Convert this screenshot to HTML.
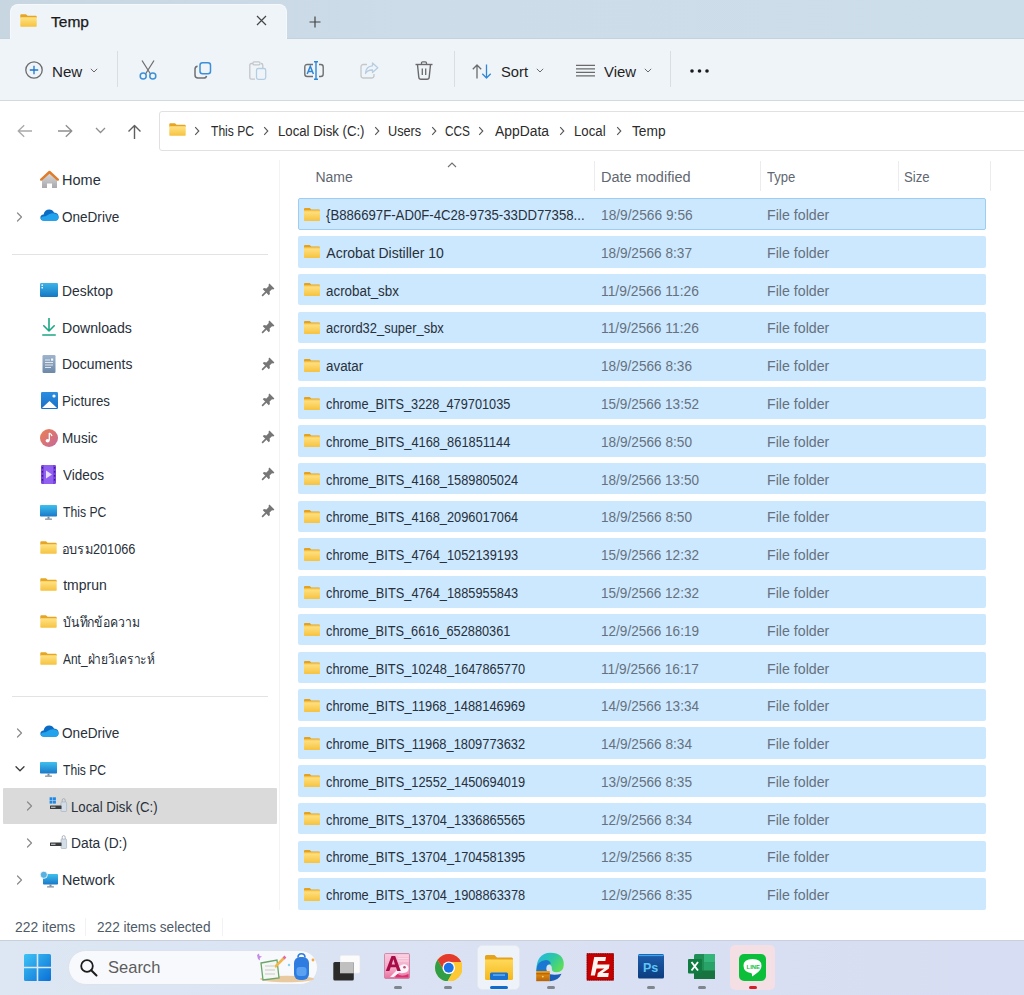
<!DOCTYPE html>
<html><head><meta charset="utf-8">
<style>
*{box-sizing:border-box;margin:0;padding:0}
html,body{width:1024px;height:995px;overflow:hidden;background:#fff;font-family:"Liberation Sans",sans-serif;font-size:14px;color:#1b1b1b}
.abs,.t,.ic,.fold,.row,.sep,.navsel{position:absolute}
.t{line-height:20px;white-space:nowrap;font-size:14px;transform-origin:0 0}
.tb{color:#1f1f1f}
.addrt{color:#2b2b2b}
.status{color:#4e5a66}
.search{color:#5d5d5d}
.name{color:#28303a}
.gray{color:#66717d}
.hdr{color:#5f6770}
svg{display:block}
#titlebar{position:absolute;left:0;top:0;width:1024px;height:39px;border-bottom:1px solid #c4d2dd;background:linear-gradient(90deg,#c8d6e1 0%,#ccdce8 40%,#cddeeb 100%)}
#tab{position:absolute;left:9.5px;top:3.5px;width:277px;height:36px;background:#eff4f9;border-radius:8px 8px 0 0;border:1px solid #f6f9fc;border-bottom:none}
#toolbar{position:absolute;left:0;top:38.5px;width:1024px;height:62px;background:#eff4f9;border-bottom:1px solid #d3d9df}
.tsep{position:absolute;width:1px;background:#d9dee3;top:51px;height:36px}
#addr{position:absolute;left:158.5px;top:110.5px;width:900px;height:40.5px;border:1px solid #e2e1df;border-radius:3px;background:#fff}
.row{left:298px;width:688px;height:31.6px;background:#cce8ff;border-radius:2px}
.row.focus{border:1px solid #9ccdf2}
.sep{left:12px;width:256px;height:1px;background:#e3e3e3}
.navsel{left:3px;width:274px;height:36px;background:#dadada;border-radius:1px}
.hsep{position:absolute;top:160.5px;width:1px;height:30px;background:#ececec}
#navline{position:absolute;left:279px;top:160px;width:1px;height:750px;background:#f3f3f3}
#taskbar{position:absolute;left:0;top:940px;width:1024px;height:55px;background:linear-gradient(90deg,#dde7f3 0%,#d9e1f3 50%,#d7ddf2 100%);border-top:1px solid #c9d0da}
#search{position:absolute;left:67.5px;top:949.8px;width:250.5px;height:35px;border-radius:18px;background:#f7f9fc;border:1px solid #dde3ea}
.ind{position:absolute;top:986px;width:8px;height:3px;border-radius:2px;background:#7f868e}
</style></head><body>
<svg width="0" height="0" style="position:absolute"><defs>
<linearGradient id="fgrad" x1="0" y1="0" x2="0" y2="1"><stop offset="0" stop-color="#ffe386"/><stop offset="1" stop-color="#f6c23f"/></linearGradient>
</defs></svg>

<!-- title bar -->
<div id="titlebar"></div>
<div id="tab"></div>
<div class="ic" style="left:20px;top:14px"><svg width="17" height="13" viewBox="0 0 17 13"><path d="M0.3 1.2Q0.3 0.2 1.3 0.2H6L7.6 1.8H15.8Q16.7 1.8 16.7 2.7V4H0.3Z" fill="#e6a623"/><path d="M0.3 3.2H16.7V12.1Q16.7 12.8 16 12.8H1Q0.3 12.8 0.3 12.1Z" fill="url(#fgrad)"/></svg></div>
<div class="ic" style="left:256px;top:15px"><svg width="11" height="11" viewBox="0 0 11 11"><path d="M1 1L10 10M10 1L1 10" stroke="#454545" stroke-width="1.2"/></svg></div>
<div class="ic" style="left:309px;top:15.5px"><svg width="12" height="12" viewBox="0 0 12 12"><path d="M6 0.5V11.5M0.5 6H11.5" stroke="#454545" stroke-width="1.2"/></svg></div>

<!-- toolbar -->
<div id="toolbar"></div>
<div class="ic" style="left:24.5px;top:61px"><svg width="18" height="18" viewBox="0 0 18 18"><circle cx="9" cy="9" r="8.2" fill="none" stroke="#6b6b6b" stroke-width="1.3"/><path d="M9 4.8V13.2M4.8 9H13.2" stroke="#1f74c9" stroke-width="1.3"/></svg></div>
<div class="ic" style="left:89.5px;top:67.5px"><svg width="8" height="5" viewBox="0 0 8 5"><path d="M0.8 0.8L4 4L7.2 0.8" fill="none" stroke="#6a6a6a" stroke-width="1"/></svg></div>
<div class="tsep" style="left:117px"></div>
<!-- cut -->
<div class="ic" style="left:138.5px;top:60px"><svg width="18" height="20" viewBox="0 0 18 20"><path d="M3 0.5L11.5 14M15 0.5L6.5 14" stroke="#707070" stroke-width="1.3"/><circle cx="4.2" cy="16" r="3" fill="none" stroke="#3d8fd8" stroke-width="1.5"/><circle cx="13.8" cy="16" r="3" fill="none" stroke="#3d8fd8" stroke-width="1.5"/></svg></div>
<!-- copy -->
<div class="ic" style="left:193.5px;top:61.5px"><svg width="18" height="17" viewBox="0 0 18 17"><rect x="6" y="0.8" width="10.5" height="11" rx="2.5" fill="none" stroke="#3d8fd8" stroke-width="1.5"/><path d="M3.6 4.2Q1 4.5 1 7.2V13Q1 16 4 16H9.5Q12.2 16 12.5 13.8" fill="none" stroke="#707070" stroke-width="1.5"/></svg></div>
<!-- paste disabled -->
<div class="ic" style="left:248.5px;top:60.5px"><svg width="18" height="19" viewBox="0 0 18 19"><path d="M4 2.5H2.5Q0.8 2.5 0.8 4.2V16.5Q0.8 18.2 2.5 18.2H6" fill="none" stroke="#c3c6c9" stroke-width="1.3"/><rect x="4" y="0.8" width="7" height="3" rx="1" fill="none" stroke="#c3c6c9" stroke-width="1.2"/><path d="M12 2.5Q13.8 2.5 13.8 4.2V7" fill="none" stroke="#c3c6c9" stroke-width="1.3"/><rect x="7.5" y="7.5" width="9.2" height="10.8" rx="1.8" fill="none" stroke="#b5cde3" stroke-width="1.3"/></svg></div>
<!-- rename -->
<div class="ic" style="left:303.5px;top:60.5px"><svg width="20" height="19" viewBox="0 0 20 19"><path d="M9 3.5H3.2Q0.8 3.5 0.8 6V13Q0.8 15.5 3.2 15.5H9M15 3.5H16.8Q19.2 3.5 19.2 6V13Q19.2 15.5 16.8 15.5H15" fill="none" stroke="#6f6f6f" stroke-width="1.4"/><path d="M3.2 13L6.3 5.2L9.4 13M4.3 10.5H8.3" fill="none" stroke="#2f86d6" stroke-width="1.5"/><path d="M12 0.8V18.2M10 0.8H14M10 18.2H14" stroke="#2f86d6" stroke-width="1.4"/></svg></div>
<!-- share disabled -->
<div class="ic" style="left:359.5px;top:62px"><svg width="19" height="17" viewBox="0 0 19 17"><path d="M7 2.5H3.5Q1 2.5 1 5V13.5Q1 16 3.5 16H11.5Q14 16 14 13.5V12" fill="none" stroke="#c4c7ca" stroke-width="1.3"/><path d="M12.5 1L17.8 5.8L12.5 10.5V8Q7.5 7.8 5.5 11.5Q5.8 4.2 12.5 3.8Z" fill="none" stroke="#b6cde2" stroke-width="1.3" stroke-linejoin="round"/></svg></div>
<!-- delete -->
<div class="ic" style="left:414.5px;top:60.5px"><svg width="18" height="19" viewBox="0 0 18 19"><path d="M6.5 3V2Q6.5 0.8 7.7 0.8H10.3Q11.5 0.8 11.5 2V3" fill="none" stroke="#6a6a6a" stroke-width="1.3"/><path d="M0.5 3.5H17.5" stroke="#6a6a6a" stroke-width="1.4"/><path d="M2.5 3.8L3.8 16.2Q4 18.2 6 18.2H12Q14 18.2 14.2 16.2L15.5 3.8" fill="none" stroke="#6a6a6a" stroke-width="1.4"/><path d="M7.3 7.5V14M10.7 7.5V14" stroke="#6a6a6a" stroke-width="1.3"/></svg></div>
<div class="tsep" style="left:454px"></div>
<!-- sort -->
<div class="ic" style="left:472px;top:63.5px"><svg width="21" height="15" viewBox="0 0 21 15"><path d="M5 14.5V1M0.8 5.2L5 1L9.2 5.2" fill="none" stroke="#6a6a6a" stroke-width="1.3" stroke-linejoin="round"/><path d="M14.5 0.5V14M10.3 9.8L14.5 14L18.7 9.8" fill="none" stroke="#2f86d6" stroke-width="1.3" stroke-linejoin="round"/></svg></div>
<div class="ic" style="left:536px;top:67.5px"><svg width="8" height="5" viewBox="0 0 8 5"><path d="M0.8 0.8L4 4L7.2 0.8" fill="none" stroke="#6a6a6a" stroke-width="1"/></svg></div>
<!-- view -->
<div class="ic" style="left:576px;top:64px"><svg width="19" height="13" viewBox="0 0 19 13"><path d="M0 1.3H19M0 4.8H19M0 8.3H19M0 11.8H19" stroke="#6a6a6a" stroke-width="1.2"/></svg></div>
<div class="ic" style="left:643.5px;top:67.5px"><svg width="8" height="5" viewBox="0 0 8 5"><path d="M0.8 0.8L4 4L7.2 0.8" fill="none" stroke="#6a6a6a" stroke-width="1"/></svg></div>
<div class="tsep" style="left:670px"></div>
<div class="ic" style="left:689.5px;top:68.5px"><svg width="19" height="4" viewBox="0 0 19 4"><circle cx="2" cy="2" r="1.8" fill="#1a1a1a"/><circle cx="9.5" cy="2" r="1.8" fill="#1a1a1a"/><circle cx="17" cy="2" r="1.8" fill="#1a1a1a"/></svg></div>

<!-- nav row -->
<div class="ic" style="left:17px;top:123.5px"><svg width="16" height="14" viewBox="0 0 16 14"><path d="M15 7H1.5M7.2 1.2L1.2 7L7.2 12.8" fill="none" stroke="#a9a9a9" stroke-width="1.3" stroke-linejoin="round"/></svg></div>
<div class="ic" style="left:57px;top:123.5px"><svg width="16" height="14" viewBox="0 0 16 14"><path d="M1 7H14.5M8.8 1.2L14.8 7L8.8 12.8" fill="none" stroke="#8e8e8e" stroke-width="1.3" stroke-linejoin="round"/></svg></div>
<div class="ic" style="left:95px;top:127px"><svg width="11" height="7" viewBox="0 0 11 7"><path d="M1 1L5.5 5.5L10 1" fill="none" stroke="#8e8e8e" stroke-width="1.3"/></svg></div>
<div class="ic" style="left:126.5px;top:123.5px"><svg width="15" height="15" viewBox="0 0 15 15"><path d="M7.5 15V1.5M1.5 7.5L7.5 1.5L13.5 7.5" fill="none" stroke="#5f5f5f" stroke-width="1.4" stroke-linejoin="round"/></svg></div>
<div id="addr"></div>
<div class="ic" style="left:169px;top:123px"><svg width="17" height="13" viewBox="0 0 17 13"><path d="M0.3 1.2Q0.3 0.2 1.3 0.2H6L7.6 1.8H15.8Q16.7 1.8 16.7 2.7V4H0.3Z" fill="#e6a623"/><path d="M0.3 3.2H16.7V12.1Q16.7 12.8 16 12.8H1Q0.3 12.8 0.3 12.1Z" fill="url(#fgrad)"/></svg></div>
<div class="ic" style="left:194px;top:125.5px"><svg width="6" height="10" viewBox="0 0 6 10"><path d="M1.2 1.2L4.8 5L1.2 8.8" fill="none" stroke="#555" stroke-width="1.1"/></svg></div>
<div class="ic" style="left:263px;top:125.5px"><svg width="6" height="10" viewBox="0 0 6 10"><path d="M1.2 1.2L4.8 5L1.2 8.8" fill="none" stroke="#555" stroke-width="1.1"/></svg></div>
<div class="ic" style="left:373.5px;top:125.5px"><svg width="6" height="10" viewBox="0 0 6 10"><path d="M1.2 1.2L4.8 5L1.2 8.8" fill="none" stroke="#555" stroke-width="1.1"/></svg></div>
<div class="ic" style="left:431px;top:125.5px"><svg width="6" height="10" viewBox="0 0 6 10"><path d="M1.2 1.2L4.8 5L1.2 8.8" fill="none" stroke="#555" stroke-width="1.1"/></svg></div>
<div class="ic" style="left:478px;top:125.5px"><svg width="6" height="10" viewBox="0 0 6 10"><path d="M1.2 1.2L4.8 5L1.2 8.8" fill="none" stroke="#555" stroke-width="1.1"/></svg></div>
<div class="ic" style="left:559px;top:125.5px"><svg width="6" height="10" viewBox="0 0 6 10"><path d="M1.2 1.2L4.8 5L1.2 8.8" fill="none" stroke="#555" stroke-width="1.1"/></svg></div>
<div class="ic" style="left:616px;top:125.5px"><svg width="6" height="10" viewBox="0 0 6 10"><path d="M1.2 1.2L4.8 5L1.2 8.8" fill="none" stroke="#555" stroke-width="1.1"/></svg></div>

<!-- nav pane -->
<div id="navline"></div>
<div class="ic" style="left:39.5px;top:170.00px"><svg width="19" height="19" viewBox="0 0 19 19"><defs><linearGradient id="hg" x1="0" y1="0" x2="0" y2="1"><stop offset="0" stop-color="#dcdcdc"/><stop offset="1" stop-color="#a8a8ad"/></linearGradient></defs><path d="M2 9L9.5 2.5L17 9V18H12V13.5H7V18H2Z" fill="url(#hg)"/><path d="M1.2 9.6L9.5 2L17.8 9.6" fill="none" stroke="#e07d2a" stroke-width="2.4" stroke-linejoin="round" stroke-linecap="round"/></svg></div>
<div class="ic" style="left:39.5px;top:209.34px"><svg width="19" height="12" viewBox="0 0 19 12"><path d="M4.2 11.8Q0.4 11.8 0.4 8.5Q0.4 5.7 3.6 5.4Q4.6 0.6 9.3 0.6Q12.6 0.6 14 3.6Q18.6 3.9 18.6 8.1Q18.6 11.8 14.8 11.8Z" fill="#0c6cc4"/><path d="M0.6 9.6Q1.5 6.8 5.5 7.2L9.5 5Q13 3.3 16.8 5.2Q18.6 6.5 18.6 8.3Q18.6 11.8 14.8 11.8H4.2Q1.4 11.8 0.6 9.6Z" fill="#22a3ec"/></svg></div>
<div class="ic" style="left:16px;top:211.84px"><svg width="8" height="10" viewBox="0 0 8 10"><path d="M1.5 1L5.5 5L1.5 9" fill="none" stroke="#8a8a8a" stroke-width="1.2" stroke-linecap="round" stroke-linejoin="round"/></svg></div>
<div class="ic" style="left:40px;top:283.02px"><svg width="18" height="14" viewBox="0 0 18 14"><defs><linearGradient id="dg" x1="0" y1="0" x2="0" y2="1"><stop offset="0" stop-color="#3bb4e8"/><stop offset="1" stop-color="#1677c2"/></linearGradient></defs><rect x="0" y="0" width="18" height="14" rx="1.2" fill="url(#dg)"/><rect x="1.5" y="1.5" width="1.5" height="1.4" fill="#fff"/><rect x="1.5" y="4" width="1.5" height="1.4" fill="#fff"/></svg></div>
<div class="ic" style="left:260.5px;top:282.92px"><svg width="14" height="14" viewBox="0 0 14 14"><path d="M8.4 0.6L13.4 5.6L12.3 6.5L11 6.2L8.6 8.6L8.9 11.1L7.8 12.2L1.8 6.2L2.9 5.1L5.4 5.4L7.8 3L7.5 1.7Z" fill="#767676"/><path d="M4.6 9.4L1.6 12.4" stroke="#767676" stroke-width="1.7" stroke-linecap="round"/></svg></div>
<div class="ic" style="left:42px;top:317.86px"><svg width="14" height="18" viewBox="0 0 14 18"><path d="M7 0.5V13M1.8 7.8L7 13L12.2 7.8" fill="none" stroke="#1ba783" stroke-width="1.6" stroke-linecap="round" stroke-linejoin="round"/><path d="M0.8 17H13.2" stroke="#1ba783" stroke-width="1.6" stroke-linecap="round"/></svg></div>
<div class="ic" style="left:260.5px;top:319.76px"><svg width="14" height="14" viewBox="0 0 14 14"><path d="M8.4 0.6L13.4 5.6L12.3 6.5L11 6.2L8.6 8.6L8.9 11.1L7.8 12.2L1.8 6.2L2.9 5.1L5.4 5.4L7.8 3L7.5 1.7Z" fill="#767676"/><path d="M4.6 9.4L1.6 12.4" stroke="#767676" stroke-width="1.7" stroke-linecap="round"/></svg></div>
<div class="ic" style="left:42px;top:355.40px"><svg width="14" height="18" viewBox="0 0 14 18"><defs><linearGradient id="docg" x1="0" y1="0" x2="0" y2="1"><stop offset="0" stop-color="#9fb4cc"/><stop offset="1" stop-color="#6c88a8"/></linearGradient></defs><rect x="0.5" y="0" width="13" height="18" rx="1.2" fill="url(#docg)"/><path d="M3 5H8M3 7.5H11M3 10H11M3 12.5H9" stroke="#fff" stroke-width="0.9" opacity="0.85"/><rect x="9" y="3.5" width="2.2" height="2.2" fill="#fff" opacity="0.9"/></svg></div>
<div class="ic" style="left:260.5px;top:356.60px"><svg width="14" height="14" viewBox="0 0 14 14"><path d="M8.4 0.6L13.4 5.6L12.3 6.5L11 6.2L8.6 8.6L8.9 11.1L7.8 12.2L1.8 6.2L2.9 5.1L5.4 5.4L7.8 3L7.5 1.7Z" fill="#767676"/><path d="M4.6 9.4L1.6 12.4" stroke="#767676" stroke-width="1.7" stroke-linecap="round"/></svg></div>
<div class="ic" style="left:40.5px;top:392.04px"><svg width="17" height="17" viewBox="0 0 17 17"><defs><linearGradient id="pg" x1="0" y1="0" x2="0" y2="1"><stop offset="0" stop-color="#2a8ee0"/><stop offset="1" stop-color="#1a6fc4"/></linearGradient></defs><rect x="0" y="0" width="17" height="17" rx="1.3" fill="url(#pg)"/><path d="M1 16L8.5 9L16 16Z" fill="#fff"/><circle cx="13" cy="4" r="1.6" fill="#fff"/></svg></div>
<div class="ic" style="left:260.5px;top:393.44px"><svg width="14" height="14" viewBox="0 0 14 14"><path d="M8.4 0.6L13.4 5.6L12.3 6.5L11 6.2L8.6 8.6L8.9 11.1L7.8 12.2L1.8 6.2L2.9 5.1L5.4 5.4L7.8 3L7.5 1.7Z" fill="#767676"/><path d="M4.6 9.4L1.6 12.4" stroke="#767676" stroke-width="1.7" stroke-linecap="round"/></svg></div>
<div class="ic" style="left:40px;top:428.58px"><svg width="18" height="18" viewBox="0 0 18 18"><defs><linearGradient id="mg" x1="0" y1="0" x2="1" y2="1"><stop offset="0" stop-color="#ef7f4f"/><stop offset="1" stop-color="#c3689e"/></linearGradient></defs><circle cx="9" cy="9" r="9" fill="url(#mg)"/><path d="M9.3 4V11.5" stroke="#fff" stroke-width="1.3"/><path d="M9.3 4Q11.5 5 12 7" stroke="#fff" stroke-width="1.3" fill="none"/><ellipse cx="7.6" cy="11.8" rx="2" ry="1.7" fill="#fff"/></svg></div>
<div class="ic" style="left:260.5px;top:430.28px"><svg width="14" height="14" viewBox="0 0 14 14"><path d="M8.4 0.6L13.4 5.6L12.3 6.5L11 6.2L8.6 8.6L8.9 11.1L7.8 12.2L1.8 6.2L2.9 5.1L5.4 5.4L7.8 3L7.5 1.7Z" fill="#767676"/><path d="M4.6 9.4L1.6 12.4" stroke="#767676" stroke-width="1.7" stroke-linecap="round"/></svg></div>
<div class="ic" style="left:41px;top:464.72px"><svg width="15" height="19" viewBox="0 0 15 19"><rect x="0" y="0" width="15" height="19" rx="1.2" fill="#7b45e0"/><rect x="3" y="0" width="9" height="19" fill="#9060f0"/><path d="M5 5.5L11 9.5L5 13.5Z" fill="#e9ddff"/><g fill="#3d1a8a"><rect x="0.8" y="2" width="1.3" height="1.6"/><rect x="0.8" y="6" width="1.3" height="1.6"/><rect x="0.8" y="10" width="1.3" height="1.6"/><rect x="0.8" y="14" width="1.3" height="1.6"/><rect x="12.9" y="2" width="1.3" height="1.6"/><rect x="12.9" y="6" width="1.3" height="1.6"/><rect x="12.9" y="10" width="1.3" height="1.6"/><rect x="12.9" y="14" width="1.3" height="1.6"/></g></svg></div>
<div class="ic" style="left:260.5px;top:467.12px"><svg width="14" height="14" viewBox="0 0 14 14"><path d="M8.4 0.6L13.4 5.6L12.3 6.5L11 6.2L8.6 8.6L8.9 11.1L7.8 12.2L1.8 6.2L2.9 5.1L5.4 5.4L7.8 3L7.5 1.7Z" fill="#767676"/><path d="M4.6 9.4L1.6 12.4" stroke="#767676" stroke-width="1.7" stroke-linecap="round"/></svg></div>
<div class="ic" style="left:40px;top:504.56px"><svg width="17" height="15" viewBox="0 0 17 15"><defs><linearGradient id="tg" x1="0" y1="0" x2="0" y2="1"><stop offset="0" stop-color="#3ec0ee"/><stop offset="1" stop-color="#1a78c8"/></linearGradient></defs><rect x="0" y="0" width="17" height="11.5" rx="0.8" fill="url(#tg)"/><rect x="7.5" y="11.5" width="2" height="2.2" fill="#7d8a96"/><rect x="5" y="13.4" width="7" height="1.3" rx="0.5" fill="#7d8a96"/></svg></div>
<div class="ic" style="left:260.5px;top:503.96px"><svg width="14" height="14" viewBox="0 0 14 14"><path d="M8.4 0.6L13.4 5.6L12.3 6.5L11 6.2L8.6 8.6L8.9 11.1L7.8 12.2L1.8 6.2L2.9 5.1L5.4 5.4L7.8 3L7.5 1.7Z" fill="#767676"/><path d="M4.6 9.4L1.6 12.4" stroke="#767676" stroke-width="1.7" stroke-linecap="round"/></svg></div>
<div class="ic" style="left:40px;top:541.20px"><svg width="17" height="13" viewBox="0 0 17 13"><path d="M0.3 1.2Q0.3 0.2 1.3 0.2H6L7.6 1.8H15.8Q16.7 1.8 16.7 2.7V4H0.3Z" fill="#e6a623"/><path d="M0.3 3.2H16.7V12.1Q16.7 12.8 16 12.8H1Q0.3 12.8 0.3 12.1Z" fill="url(#fgrad)"/></svg></div>
<div class="ic" style="left:40px;top:578.04px"><svg width="17" height="13" viewBox="0 0 17 13"><path d="M0.3 1.2Q0.3 0.2 1.3 0.2H6L7.6 1.8H15.8Q16.7 1.8 16.7 2.7V4H0.3Z" fill="#e6a623"/><path d="M0.3 3.2H16.7V12.1Q16.7 12.8 16 12.8H1Q0.3 12.8 0.3 12.1Z" fill="url(#fgrad)"/></svg></div>
<div class="ic" style="left:40px;top:614.88px"><svg width="17" height="13" viewBox="0 0 17 13"><path d="M0.3 1.2Q0.3 0.2 1.3 0.2H6L7.6 1.8H15.8Q16.7 1.8 16.7 2.7V4H0.3Z" fill="#e6a623"/><path d="M0.3 3.2H16.7V12.1Q16.7 12.8 16 12.8H1Q0.3 12.8 0.3 12.1Z" fill="url(#fgrad)"/></svg></div>
<div class="ic" style="left:40px;top:651.72px"><svg width="17" height="13" viewBox="0 0 17 13"><path d="M0.3 1.2Q0.3 0.2 1.3 0.2H6L7.6 1.8H15.8Q16.7 1.8 16.7 2.7V4H0.3Z" fill="#e6a623"/><path d="M0.3 3.2H16.7V12.1Q16.7 12.8 16 12.8H1Q0.3 12.8 0.3 12.1Z" fill="url(#fgrad)"/></svg></div>
<div class="ic" style="left:39.5px;top:725.10px"><svg width="19" height="12" viewBox="0 0 19 12"><path d="M4.2 11.8Q0.4 11.8 0.4 8.5Q0.4 5.7 3.6 5.4Q4.6 0.6 9.3 0.6Q12.6 0.6 14 3.6Q18.6 3.9 18.6 8.1Q18.6 11.8 14.8 11.8Z" fill="#0c6cc4"/><path d="M0.6 9.6Q1.5 6.8 5.5 7.2L9.5 5Q13 3.3 16.8 5.2Q18.6 6.5 18.6 8.3Q18.6 11.8 14.8 11.8H4.2Q1.4 11.8 0.6 9.6Z" fill="#22a3ec"/></svg></div>
<div class="ic" style="left:16px;top:727.60px"><svg width="8" height="10" viewBox="0 0 8 10"><path d="M1.5 1L5.5 5L1.5 9" fill="none" stroke="#8a8a8a" stroke-width="1.2" stroke-linecap="round" stroke-linejoin="round"/></svg></div>
<div class="ic" style="left:40px;top:762.44px"><svg width="17" height="15" viewBox="0 0 17 15"><defs><linearGradient id="tg" x1="0" y1="0" x2="0" y2="1"><stop offset="0" stop-color="#3ec0ee"/><stop offset="1" stop-color="#1a78c8"/></linearGradient></defs><rect x="0" y="0" width="17" height="11.5" rx="0.8" fill="url(#tg)"/><rect x="7.5" y="11.5" width="2" height="2.2" fill="#7d8a96"/><rect x="5" y="13.4" width="7" height="1.3" rx="0.5" fill="#7d8a96"/></svg></div>
<div class="ic" style="left:15px;top:765.44px"><svg width="10" height="8" viewBox="0 0 10 8"><path d="M1 1.8L5 5.8L9 1.8" fill="none" stroke="#3a3a3a" stroke-width="1.3" stroke-linecap="round" stroke-linejoin="round"/></svg></div>
<div class="navsel" style="top:788.28px"></div>
<div class="ic" style="left:48.5px;top:797.08px"><svg width="19" height="16" viewBox="0 0 19 16"><rect x="0.6" y="0.3" width="2.9" height="2.9" fill="#1e88e5"/><rect x="4" y="0.3" width="2.9" height="2.9" fill="#1e88e5"/><rect x="0.6" y="3.7" width="2.9" height="2.9" fill="#1e88e5"/><rect x="4" y="3.7" width="2.9" height="2.9" fill="#1e88e5"/><path d="M13.2 5V3.2Q13.2 1.6 14.7 1.6Q16.2 1.6 16.2 3.2V5" fill="none" stroke="#a3adb6" stroke-width="0.9"/><rect x="12" y="5" width="5.6" height="9.5" rx="0.8" fill="#d3dde7" stroke="#a3adb6" stroke-width="0.6"/><rect x="1" y="8.5" width="11.5" height="3.6" rx="0.6" fill="#3a3d3f"/><rect x="2" y="9.7" width="4.5" height="1.1" fill="#c9cdd0"/></svg></div>
<div class="ic" style="left:25.5px;top:801.28px"><svg width="8" height="10" viewBox="0 0 8 10"><path d="M1.5 1L5.5 5L1.5 9" fill="none" stroke="#8a8a8a" stroke-width="1.2" stroke-linecap="round" stroke-linejoin="round"/></svg></div>
<div class="ic" style="left:48.5px;top:833.92px"><svg width="19" height="16" viewBox="0 0 19 16"><path d="M13.2 5V3.2Q13.2 1.6 14.7 1.6Q16.2 1.6 16.2 3.2V5" fill="none" stroke="#a3adb6" stroke-width="0.9"/><rect x="12" y="5" width="5.6" height="9.5" rx="0.8" fill="#d3dde7" stroke="#a3adb6" stroke-width="0.6"/><rect x="1" y="8.5" width="11.5" height="3.6" rx="0.6" fill="#3a3d3f"/><rect x="2" y="9.7" width="4.5" height="1.1" fill="#c9cdd0"/></svg></div>
<div class="ic" style="left:25.5px;top:838.12px"><svg width="8" height="10" viewBox="0 0 8 10"><path d="M1.5 1L5.5 5L1.5 9" fill="none" stroke="#8a8a8a" stroke-width="1.2" stroke-linecap="round" stroke-linejoin="round"/></svg></div>
<div class="ic" style="left:40px;top:870.96px"><svg width="18" height="17" viewBox="0 0 18 17"><defs><linearGradient id="ng" x1="0" y1="0" x2="0" y2="1"><stop offset="0" stop-color="#3ec0ee"/><stop offset="1" stop-color="#1a78c8"/></linearGradient></defs><rect x="3" y="3" width="15" height="10.5" rx="0.8" fill="url(#ng)"/><rect x="9.5" y="13.5" width="2" height="2" fill="#7d8a96"/><rect x="7" y="15.2" width="7" height="1.3" rx="0.5" fill="#7d8a96"/><circle cx="3.8" cy="3.8" r="3.6" fill="#5ab0e0" stroke="#fff" stroke-width="0.8"/></svg></div>
<div class="ic" style="left:16px;top:874.96px"><svg width="8" height="10" viewBox="0 0 8 10"><path d="M1.5 1L5.5 5L1.5 9" fill="none" stroke="#8a8a8a" stroke-width="1.2" stroke-linecap="round" stroke-linejoin="round"/></svg></div>
<div class="sep" style="top:253.7px"></div>
<div class="sep" style="top:695.8px"></div>

<!-- header -->
<div class="ic" style="left:446.5px;top:161.8px"><svg width="10" height="6" viewBox="0 0 10 6"><path d="M1 5L5 1L9 5" fill="none" stroke="#707070" stroke-width="1.1"/></svg></div>
<div class="hsep" style="left:594.3px"></div>
<div class="hsep" style="left:760px"></div>
<div class="hsep" style="left:898px"></div>
<div class="hsep" style="left:990px"></div>

<!-- rows -->
<div class="row focus" style="top:198.20px"></div>
<div class="fold" style="left:304px;top:207.60px"><svg class="fi" width="16" height="13" viewBox="0 0 16 13"><path d="M0 1Q0 0 1 0H5.8L7.3 1.5H15Q16 1.5 16 2.5V4H0Z" fill="#e4a21f"/><path d="M0 2.6H16V12.2Q16 13 15.2 13H0.8Q0 13 0 12.2Z" fill="url(#fgrad)"/><path d="M0 2.9H16" stroke="#f0b73a" stroke-width="0.7"/></svg></div>
<div class="row" style="top:235.99px"></div>
<div class="fold" style="left:304px;top:245.39px"><svg class="fi" width="16" height="13" viewBox="0 0 16 13"><path d="M0 1Q0 0 1 0H5.8L7.3 1.5H15Q16 1.5 16 2.5V4H0Z" fill="#e4a21f"/><path d="M0 2.6H16V12.2Q16 13 15.2 13H0.8Q0 13 0 12.2Z" fill="url(#fgrad)"/><path d="M0 2.9H16" stroke="#f0b73a" stroke-width="0.7"/></svg></div>
<div class="row" style="top:273.78px"></div>
<div class="fold" style="left:304px;top:283.18px"><svg class="fi" width="16" height="13" viewBox="0 0 16 13"><path d="M0 1Q0 0 1 0H5.8L7.3 1.5H15Q16 1.5 16 2.5V4H0Z" fill="#e4a21f"/><path d="M0 2.6H16V12.2Q16 13 15.2 13H0.8Q0 13 0 12.2Z" fill="url(#fgrad)"/><path d="M0 2.9H16" stroke="#f0b73a" stroke-width="0.7"/></svg></div>
<div class="row" style="top:311.57px"></div>
<div class="fold" style="left:304px;top:320.97px"><svg class="fi" width="16" height="13" viewBox="0 0 16 13"><path d="M0 1Q0 0 1 0H5.8L7.3 1.5H15Q16 1.5 16 2.5V4H0Z" fill="#e4a21f"/><path d="M0 2.6H16V12.2Q16 13 15.2 13H0.8Q0 13 0 12.2Z" fill="url(#fgrad)"/><path d="M0 2.9H16" stroke="#f0b73a" stroke-width="0.7"/></svg></div>
<div class="row" style="top:349.36px"></div>
<div class="fold" style="left:304px;top:358.76px"><svg class="fi" width="16" height="13" viewBox="0 0 16 13"><path d="M0 1Q0 0 1 0H5.8L7.3 1.5H15Q16 1.5 16 2.5V4H0Z" fill="#e4a21f"/><path d="M0 2.6H16V12.2Q16 13 15.2 13H0.8Q0 13 0 12.2Z" fill="url(#fgrad)"/><path d="M0 2.9H16" stroke="#f0b73a" stroke-width="0.7"/></svg></div>
<div class="row" style="top:387.15px"></div>
<div class="fold" style="left:304px;top:396.55px"><svg class="fi" width="16" height="13" viewBox="0 0 16 13"><path d="M0 1Q0 0 1 0H5.8L7.3 1.5H15Q16 1.5 16 2.5V4H0Z" fill="#e4a21f"/><path d="M0 2.6H16V12.2Q16 13 15.2 13H0.8Q0 13 0 12.2Z" fill="url(#fgrad)"/><path d="M0 2.9H16" stroke="#f0b73a" stroke-width="0.7"/></svg></div>
<div class="row" style="top:424.94px"></div>
<div class="fold" style="left:304px;top:434.34px"><svg class="fi" width="16" height="13" viewBox="0 0 16 13"><path d="M0 1Q0 0 1 0H5.8L7.3 1.5H15Q16 1.5 16 2.5V4H0Z" fill="#e4a21f"/><path d="M0 2.6H16V12.2Q16 13 15.2 13H0.8Q0 13 0 12.2Z" fill="url(#fgrad)"/><path d="M0 2.9H16" stroke="#f0b73a" stroke-width="0.7"/></svg></div>
<div class="row" style="top:462.73px"></div>
<div class="fold" style="left:304px;top:472.13px"><svg class="fi" width="16" height="13" viewBox="0 0 16 13"><path d="M0 1Q0 0 1 0H5.8L7.3 1.5H15Q16 1.5 16 2.5V4H0Z" fill="#e4a21f"/><path d="M0 2.6H16V12.2Q16 13 15.2 13H0.8Q0 13 0 12.2Z" fill="url(#fgrad)"/><path d="M0 2.9H16" stroke="#f0b73a" stroke-width="0.7"/></svg></div>
<div class="row" style="top:500.52px"></div>
<div class="fold" style="left:304px;top:509.92px"><svg class="fi" width="16" height="13" viewBox="0 0 16 13"><path d="M0 1Q0 0 1 0H5.8L7.3 1.5H15Q16 1.5 16 2.5V4H0Z" fill="#e4a21f"/><path d="M0 2.6H16V12.2Q16 13 15.2 13H0.8Q0 13 0 12.2Z" fill="url(#fgrad)"/><path d="M0 2.9H16" stroke="#f0b73a" stroke-width="0.7"/></svg></div>
<div class="row" style="top:538.31px"></div>
<div class="fold" style="left:304px;top:547.71px"><svg class="fi" width="16" height="13" viewBox="0 0 16 13"><path d="M0 1Q0 0 1 0H5.8L7.3 1.5H15Q16 1.5 16 2.5V4H0Z" fill="#e4a21f"/><path d="M0 2.6H16V12.2Q16 13 15.2 13H0.8Q0 13 0 12.2Z" fill="url(#fgrad)"/><path d="M0 2.9H16" stroke="#f0b73a" stroke-width="0.7"/></svg></div>
<div class="row" style="top:576.10px"></div>
<div class="fold" style="left:304px;top:585.50px"><svg class="fi" width="16" height="13" viewBox="0 0 16 13"><path d="M0 1Q0 0 1 0H5.8L7.3 1.5H15Q16 1.5 16 2.5V4H0Z" fill="#e4a21f"/><path d="M0 2.6H16V12.2Q16 13 15.2 13H0.8Q0 13 0 12.2Z" fill="url(#fgrad)"/><path d="M0 2.9H16" stroke="#f0b73a" stroke-width="0.7"/></svg></div>
<div class="row" style="top:613.89px"></div>
<div class="fold" style="left:304px;top:623.29px"><svg class="fi" width="16" height="13" viewBox="0 0 16 13"><path d="M0 1Q0 0 1 0H5.8L7.3 1.5H15Q16 1.5 16 2.5V4H0Z" fill="#e4a21f"/><path d="M0 2.6H16V12.2Q16 13 15.2 13H0.8Q0 13 0 12.2Z" fill="url(#fgrad)"/><path d="M0 2.9H16" stroke="#f0b73a" stroke-width="0.7"/></svg></div>
<div class="row" style="top:651.68px"></div>
<div class="fold" style="left:304px;top:661.08px"><svg class="fi" width="16" height="13" viewBox="0 0 16 13"><path d="M0 1Q0 0 1 0H5.8L7.3 1.5H15Q16 1.5 16 2.5V4H0Z" fill="#e4a21f"/><path d="M0 2.6H16V12.2Q16 13 15.2 13H0.8Q0 13 0 12.2Z" fill="url(#fgrad)"/><path d="M0 2.9H16" stroke="#f0b73a" stroke-width="0.7"/></svg></div>
<div class="row" style="top:689.47px"></div>
<div class="fold" style="left:304px;top:698.87px"><svg class="fi" width="16" height="13" viewBox="0 0 16 13"><path d="M0 1Q0 0 1 0H5.8L7.3 1.5H15Q16 1.5 16 2.5V4H0Z" fill="#e4a21f"/><path d="M0 2.6H16V12.2Q16 13 15.2 13H0.8Q0 13 0 12.2Z" fill="url(#fgrad)"/><path d="M0 2.9H16" stroke="#f0b73a" stroke-width="0.7"/></svg></div>
<div class="row" style="top:727.26px"></div>
<div class="fold" style="left:304px;top:736.66px"><svg class="fi" width="16" height="13" viewBox="0 0 16 13"><path d="M0 1Q0 0 1 0H5.8L7.3 1.5H15Q16 1.5 16 2.5V4H0Z" fill="#e4a21f"/><path d="M0 2.6H16V12.2Q16 13 15.2 13H0.8Q0 13 0 12.2Z" fill="url(#fgrad)"/><path d="M0 2.9H16" stroke="#f0b73a" stroke-width="0.7"/></svg></div>
<div class="row" style="top:765.05px"></div>
<div class="fold" style="left:304px;top:774.45px"><svg class="fi" width="16" height="13" viewBox="0 0 16 13"><path d="M0 1Q0 0 1 0H5.8L7.3 1.5H15Q16 1.5 16 2.5V4H0Z" fill="#e4a21f"/><path d="M0 2.6H16V12.2Q16 13 15.2 13H0.8Q0 13 0 12.2Z" fill="url(#fgrad)"/><path d="M0 2.9H16" stroke="#f0b73a" stroke-width="0.7"/></svg></div>
<div class="row" style="top:802.84px"></div>
<div class="fold" style="left:304px;top:812.24px"><svg class="fi" width="16" height="13" viewBox="0 0 16 13"><path d="M0 1Q0 0 1 0H5.8L7.3 1.5H15Q16 1.5 16 2.5V4H0Z" fill="#e4a21f"/><path d="M0 2.6H16V12.2Q16 13 15.2 13H0.8Q0 13 0 12.2Z" fill="url(#fgrad)"/><path d="M0 2.9H16" stroke="#f0b73a" stroke-width="0.7"/></svg></div>
<div class="row" style="top:840.63px"></div>
<div class="fold" style="left:304px;top:850.03px"><svg class="fi" width="16" height="13" viewBox="0 0 16 13"><path d="M0 1Q0 0 1 0H5.8L7.3 1.5H15Q16 1.5 16 2.5V4H0Z" fill="#e4a21f"/><path d="M0 2.6H16V12.2Q16 13 15.2 13H0.8Q0 13 0 12.2Z" fill="url(#fgrad)"/><path d="M0 2.9H16" stroke="#f0b73a" stroke-width="0.7"/></svg></div>
<div class="row" style="top:878.42px"></div>
<div class="fold" style="left:304px;top:887.82px"><svg class="fi" width="16" height="13" viewBox="0 0 16 13"><path d="M0 1Q0 0 1 0H5.8L7.3 1.5H15Q16 1.5 16 2.5V4H0Z" fill="#e4a21f"/><path d="M0 2.6H16V12.2Q16 13 15.2 13H0.8Q0 13 0 12.2Z" fill="url(#fgrad)"/><path d="M0 2.9H16" stroke="#f0b73a" stroke-width="0.7"/></svg></div>

<!-- status -->
<div class="abs" style="left:85px;top:918px;width:1px;height:18px;background:#f2f2f2"></div>
<div class="abs" style="left:222px;top:918px;width:1px;height:18px;background:#f2f2f2"></div>

<!-- taskbar -->
<div id="taskbar"></div>
<!-- start -->
<div class="ic" style="left:24px;top:954px"><svg width="27" height="27" viewBox="0 0 27 27"><defs><linearGradient id="wg" x1="0" y1="0" x2="1" y2="1"><stop offset="0" stop-color="#3fc3f5"/><stop offset="1" stop-color="#0a6fd6"/></linearGradient></defs><path d="M1.5 0H12.7V12.7H0V1.5Q0 0 1.5 0Z M14.3 0H25.5Q27 0 27 1.5V12.7H14.3Z M0 14.3H12.7V27H1.5Q0 27 0 25.5Z M14.3 14.3H27V25.5Q27 27 25.5 27H14.3Z" fill="url(#wg)"/></svg></div>
<!-- search -->
<div id="search"></div>
<div class="ic" style="left:80px;top:958.5px"><svg width="18" height="18" viewBox="0 0 18 18"><circle cx="7" cy="7" r="5.8" fill="none" stroke="#1c1c1c" stroke-width="1.8"/><path d="M11.2 11.2L16.5 16.5" stroke="#1c1c1c" stroke-width="2" stroke-linecap="round"/></svg></div>
<div class="ic" style="left:257px;top:953px"><svg width="58" height="30" viewBox="0 0 58 30"><ellipse cx="30" cy="26" rx="27" ry="3.2" fill="#e9c9a0"/><path d="M4 10L20 7L22 25L6 27Z" fill="#f4f7f4" stroke="#6aa56a" stroke-width="1.3"/><path d="M8 13H17M8 17H18M8 21H18" stroke="#c9c9c9" stroke-width="1"/><path d="M18 14L27 5" stroke="#f1b64a" stroke-width="2.5"/><path d="M26.5 3.5L28.5 5.5" stroke="#e46aa0" stroke-width="2.5"/><path d="M0 2L2 0.5L2.5 3L5 3.5L2.8 5L3 7.5L1 6Z" fill="#c48ae8"/><rect x="37" y="4" width="15" height="23" rx="6" fill="#2f7ce0"/><rect x="39.5" y="14" width="10" height="9" rx="3" fill="#5aa1f2"/><path d="M41 4.5Q41 0.8 44.5 0.8Q48 0.8 48 4.5" fill="none" stroke="#2f7ce0" stroke-width="1.6"/><circle cx="56" cy="7" r="1.4" fill="#f2a64a"/><circle cx="32" cy="12" r="1.2" fill="#7dd3f0"/></svg></div>
<!-- task view -->
<div class="ic" style="left:333px;top:954.5px"><svg width="28" height="26" viewBox="0 0 28 26"><rect x="7" y="0.3" width="20" height="18" rx="1.5" fill="#fbfbfb" stroke="#e2e6ea" stroke-width="0.6"/><rect x="0.3" y="7" width="20.5" height="18.5" rx="1.5" fill="#2b2b2b"/><rect x="7" y="7" width="13.8" height="11.3" fill="#c0c0c0"/></svg></div>
<!-- access -->
<div class="ic" style="left:384px;top:953px"><svg width="26" height="26" viewBox="0 0 26 26"><defs><linearGradient id="ag" x1="0" y1="0" x2="0" y2="1"><stop offset="0" stop-color="#f9c9dc"/><stop offset="0.6" stop-color="#f2a9c8"/><stop offset="1" stop-color="#e9709f"/></linearGradient></defs><rect x="0.5" y="0.5" width="25" height="25" rx="1.2" fill="url(#ag)" stroke="#c8789d" stroke-width="0.8"/><path d="M14 3H24.5M14 5.5H24.5M14 8H24.5" stroke="#fbd8e6" stroke-width="1"/><path d="M13 20.5Q17 24.5 24.5 21V24.5H11Z" fill="#d9336f"/><path d="M6 24L13.5 16.5Q14.5 12 19.5 11.2Q24.5 11.2 24.5 15.5Q24.5 19.5 19.5 20Q16.5 20.5 15.5 19.5L9.5 24Z" fill="#fff4f8"/><path d="M1.8 18L7.5 3H11.2L16.8 18H13.3L12 14.3H6.7L5.4 18Z M7.7 11.4H11L9.35 6.3Z" fill="#a90d48" fill-rule="evenodd"/><circle cx="20.5" cy="14.3" r="1.3" fill="#b5557e"/></svg></div>
<div class="ind" style="left:394px"></div>
<!-- chrome -->
<div class="ic" style="left:434.8px;top:953.5px"><svg width="27.5" height="27.5" viewBox="0 0 48 48"><circle cx="24" cy="24" r="23.8" fill="#fcc934"/><path d="M24 14L45.8 14A24 24 0 0 0 4.44 10.12L15.34 29A10 10 0 0 1 24 14Z" fill="#e33b2e"/><path d="M24 14L45.8 14A24 24 0 0 0 4.44 10.12L15.34 29A10 10 0 0 1 24 14Z" fill="#2f9e44" transform="rotate(240 24 24)"/><path d="M24 14L45.8 14A24 24 0 0 0 4.44 10.12L15.34 29A10 10 0 0 1 24 14Z" fill="#fcc934" transform="rotate(120 24 24)"/><circle cx="24" cy="24" r="11" fill="#fff"/><circle cx="24" cy="24" r="8.6" fill="#1a73e8"/></svg></div>
<div class="ind" style="left:444px"></div>
<!-- explorer (active) -->
<div class="abs" style="left:477px;top:945px;width:43px;height:45px;border-radius:5px;background:#eef2f9;border:1px solid #e4e9f1"></div>
<div class="ic" style="left:485px;top:954.5px"><svg width="28" height="25" viewBox="0 0 28 25"><defs><linearGradient id="eg" x1="0" y1="0" x2="0" y2="1"><stop offset="0" stop-color="#ffd95a"/><stop offset="1" stop-color="#f5b81c"/></linearGradient></defs><path d="M0 1.5Q0 0 1.5 0H9.5L12 2.5H26.5Q28 2.5 28 4V7H0Z" fill="#e6a21a"/><path d="M0 4.5H28V23.5Q28 25 26.5 25H1.5Q0 25 0 23.5Z" fill="url(#eg)"/><rect x="5" y="17.5" width="18" height="7.5" rx="1.5" fill="#1a73d0"/><rect x="8" y="19.3" width="12" height="1.5" fill="#5fb0f5"/></svg></div>
<div class="abs" style="left:490px;top:986px;width:17.5px;height:3px;border-radius:2px;background:#0f6ccc"></div>
<!-- edge -->
<div class="ic" style="left:530px;top:948px"><svg width="40" height="40" viewBox="0 0 40 40"><defs><linearGradient id="edg" x1="0" y1="0" x2="1" y2="0.6"><stop offset="0" stop-color="#21b6ee"/><stop offset="0.55" stop-color="#2cc7a8"/><stop offset="1" stop-color="#5ddc5a"/></linearGradient><linearGradient id="bcg" x1="0" y1="0" x2="0" y2="1"><stop offset="0" stop-color="#f29b10"/><stop offset="1" stop-color="#b56208"/></linearGradient></defs><path d="M6.3 23Q6.3 5 20.5 4.8Q33.8 5 33.8 16.5Q33.6 24.3 26.5 24.3Q21.5 24.2 21.8 20.5Q22 17.5 19.5 16.8Q16.5 16.5 16 20Q15.8 22 16.5 23Z" fill="url(#edg)"/><path d="M6.3 23Q6.5 12.5 16 12Q19.8 12 21 15.8Q17.8 15.2 16.5 18.5Q16 20.8 16.8 23Z" fill="#1b78d2"/><path d="M6.2 23H19.8V33.2H6.2Z" fill="url(#bcg)"/><path d="M6.2 25.8H19.8" stroke="#9c5508" stroke-width="0.9"/><circle cx="12.8" cy="28.6" r="0.9" fill="#ffd36b"/><path d="M19.8 26.3Q25.5 27.5 31.5 25.8Q28.5 33 19.8 33.2Z" fill="#1b5db6"/></svg></div>
<div class="ind" style="left:546.5px"></div>
<!-- filezilla -->
<div class="ic" style="left:582px;top:949px"><svg width="36" height="36" viewBox="0 0 36 36"><rect x="4.7" y="4.3" width="27.1" height="27.2" fill="#c40000"/><rect x="5.2" y="4.8" width="26.1" height="26.2" fill="none" stroke="#7a0000" stroke-width="1" stroke-dasharray="0.9 0.9"/><path d="M12.2 8H24L23.3 11.9H16L15.3 15.6H27.5L26.9 19.4L20.5 24H26.8L26.2 27.9H15.2L15.8 24.1L22.3 19.4H14.5L12.9 26.6H8.7Z" fill="#fff4f0"/></svg></div>
<!-- photoshop -->
<div class="ic" style="left:638px;top:954px"><svg width="26" height="25" viewBox="0 0 26 25"><defs><linearGradient id="psg" x1="0" y1="0" x2="0" y2="1"><stop offset="0" stop-color="#1e5fae"/><stop offset="1" stop-color="#0c3c7e"/></linearGradient></defs><rect x="0" y="0" width="26" height="24.5" rx="1.5" fill="url(#psg)"/><path d="M0.5 1.5H25.5" stroke="#3aa8f0" stroke-width="1.2"/><text x="5" y="17.5" font-family="Liberation Sans" font-weight="bold" font-size="12.5" fill="#5ec4f7">Ps</text></svg></div>
<div class="ind" style="left:647px"></div>
<!-- excel -->
<div class="ic" style="left:688px;top:954px"><svg width="27" height="25" viewBox="0 0 27 25"><rect x="6" y="0" width="21" height="25" rx="1.5" fill="#1f8f56"/><rect x="16" y="0" width="11" height="8.3" fill="#36b57a"/><rect x="16" y="8.3" width="11" height="8.3" fill="#2aa368"/><rect x="6" y="16.6" width="21" height="8.4" fill="#17743f"/><rect x="0" y="5" width="14" height="14.5" rx="1" fill="#107c41"/><path d="M3.5 8L10 16.5M10 8L3.5 16.5" stroke="#fff" stroke-width="1.9"/></svg></div>
<div class="ind" style="left:698px"></div>
<!-- line (attention) -->
<div class="abs" style="left:729.5px;top:945px;width:45px;height:45px;border-radius:5px;background:#f3dfe4"></div>
<div class="ic" style="left:739px;top:953.5px"><svg width="27" height="27" viewBox="0 0 27 27"><rect x="0" y="0" width="27" height="27" rx="5" fill="#0bbf3a"/><path d="M13.5 5Q22.5 5 22.5 11.8Q22.5 16.5 16 20.5Q14 21.8 13 22.5Q13.3 20 12.5 19.3Q4.5 18 4.5 11.8Q4.5 5 13.5 5Z" fill="#fff"/><text x="7.6" y="14.5" font-family="Liberation Sans" font-weight="bold" font-size="5.8" fill="#0bbf3a">LINE</text></svg></div>
<div class="abs" style="left:749px;top:986px;width:8px;height:3px;border-radius:2px;background:#d2202a"></div>

<div class="t name" style="left:326.30px;top:205px;font-size:14px;transform:scaleX(0.9412);">{B886697F-AD0F-4C28-9735-33DD77358...</div>
<div class="t gray" style="left:601.22px;top:205px;font-size:14px;transform:scaleX(0.9815);">18/9/2566 9:56</div>
<div class="t gray" style="left:766.99px;top:205px;font-size:14px;transform:scaleX(1.0133);">File folder</div>
<div class="t name" style="left:326.30px;top:243px;font-size:14px;">Acrobat Distiller 10</div>
<div class="t gray" style="left:601.23px;top:243px;font-size:14px;transform:scaleX(0.9739);">18/9/2566 8:37</div>
<div class="t gray" style="left:766.99px;top:243px;font-size:14px;transform:scaleX(1.0133);">File folder</div>
<div class="t name" style="left:326.04px;top:281px;font-size:14px;transform:scaleX(0.9560);">acrobat_sbx</div>
<div class="t gray" style="left:601.21px;top:281px;font-size:14px;transform:scaleX(0.9878);">11/9/2566 11:26</div>
<div class="t gray" style="left:766.99px;top:281px;font-size:14px;transform:scaleX(1.0133);">File folder</div>
<div class="t name" style="left:326.08px;top:318px;font-size:14px;transform:scaleX(0.9228);">acrord32_super_sbx</div>
<div class="t gray" style="left:601.21px;top:318px;font-size:14px;transform:scaleX(0.9878);">11/9/2566 11:26</div>
<div class="t gray" style="left:766.99px;top:318px;font-size:14px;transform:scaleX(1.0133);">File folder</div>
<div class="t name" style="left:326.04px;top:356px;font-size:14px;transform:scaleX(0.9553);">avatar</div>
<div class="t gray" style="left:601.23px;top:356px;font-size:14px;transform:scaleX(0.9739);">18/9/2566 8:36</div>
<div class="t gray" style="left:766.99px;top:356px;font-size:14px;transform:scaleX(1.0133);">File folder</div>
<div class="t name" style="left:326.09px;top:394px;font-size:14px;transform:scaleX(0.9109);">chrome_BITS_3228_479701035</div>
<div class="t gray" style="left:601.23px;top:394px;font-size:14px;transform:scaleX(0.9680);">15/9/2566 13:52</div>
<div class="t gray" style="left:766.99px;top:394px;font-size:14px;transform:scaleX(1.0133);">File folder</div>
<div class="t name" style="left:326.08px;top:432px;font-size:14px;transform:scaleX(0.9155);">chrome_BITS_4168_861851144</div>
<div class="t gray" style="left:601.23px;top:432px;font-size:14px;transform:scaleX(0.9739);">18/9/2566 8:50</div>
<div class="t gray" style="left:766.99px;top:432px;font-size:14px;transform:scaleX(1.0133);">File folder</div>
<div class="t name" style="left:326.09px;top:470px;font-size:14px;transform:scaleX(0.9144);">chrome_BITS_4168_1589805024</div>
<div class="t gray" style="left:601.23px;top:470px;font-size:14px;transform:scaleX(0.9680);">18/9/2566 13:50</div>
<div class="t gray" style="left:766.99px;top:470px;font-size:14px;transform:scaleX(1.0133);">File folder</div>
<div class="t name" style="left:326.09px;top:507px;font-size:14px;transform:scaleX(0.9144);">chrome_BITS_4168_2096017064</div>
<div class="t gray" style="left:601.23px;top:507px;font-size:14px;transform:scaleX(0.9739);">18/9/2566 8:50</div>
<div class="t gray" style="left:766.99px;top:507px;font-size:14px;transform:scaleX(1.0133);">File folder</div>
<div class="t name" style="left:326.09px;top:545px;font-size:14px;transform:scaleX(0.9144);">chrome_BITS_4764_1052139193</div>
<div class="t gray" style="left:601.23px;top:545px;font-size:14px;transform:scaleX(0.9680);">15/9/2566 12:32</div>
<div class="t gray" style="left:766.99px;top:545px;font-size:14px;transform:scaleX(1.0133);">File folder</div>
<div class="t name" style="left:326.09px;top:583px;font-size:14px;transform:scaleX(0.9144);">chrome_BITS_4764_1885955843</div>
<div class="t gray" style="left:601.23px;top:583px;font-size:14px;transform:scaleX(0.9680);">15/9/2566 12:32</div>
<div class="t gray" style="left:766.99px;top:583px;font-size:14px;transform:scaleX(1.0133);">File folder</div>
<div class="t name" style="left:326.09px;top:621px;font-size:14px;transform:scaleX(0.9109);">chrome_BITS_6616_652880361</div>
<div class="t gray" style="left:601.23px;top:621px;font-size:14px;transform:scaleX(0.9680);">12/9/2566 16:19</div>
<div class="t gray" style="left:766.99px;top:621px;font-size:14px;transform:scaleX(1.0133);">File folder</div>
<div class="t name" style="left:326.09px;top:659px;font-size:14px;transform:scaleX(0.9138);">chrome_BITS_10248_1647865770</div>
<div class="t gray" style="left:601.22px;top:659px;font-size:14px;transform:scaleX(0.9778);">11/9/2566 16:17</div>
<div class="t gray" style="left:766.99px;top:659px;font-size:14px;transform:scaleX(1.0133);">File folder</div>
<div class="t name" style="left:326.08px;top:696px;font-size:14px;transform:scaleX(0.9181);">chrome_BITS_11968_1488146969</div>
<div class="t gray" style="left:601.23px;top:696px;font-size:14px;transform:scaleX(0.9680);">14/9/2566 13:34</div>
<div class="t gray" style="left:766.99px;top:696px;font-size:14px;transform:scaleX(1.0133);">File folder</div>
<div class="t name" style="left:326.08px;top:734px;font-size:14px;transform:scaleX(0.9181);">chrome_BITS_11968_1809773632</div>
<div class="t gray" style="left:601.23px;top:734px;font-size:14px;transform:scaleX(0.9739);">14/9/2566 8:34</div>
<div class="t gray" style="left:766.99px;top:734px;font-size:14px;transform:scaleX(1.0133);">File folder</div>
<div class="t name" style="left:326.09px;top:772px;font-size:14px;transform:scaleX(0.9138);">chrome_BITS_12552_1450694019</div>
<div class="t gray" style="left:601.23px;top:772px;font-size:14px;transform:scaleX(0.9739);">13/9/2566 8:35</div>
<div class="t gray" style="left:766.99px;top:772px;font-size:14px;transform:scaleX(1.0133);">File folder</div>
<div class="t name" style="left:326.09px;top:810px;font-size:14px;transform:scaleX(0.9138);">chrome_BITS_13704_1336865565</div>
<div class="t gray" style="left:601.23px;top:810px;font-size:14px;transform:scaleX(0.9739);">12/9/2566 8:34</div>
<div class="t gray" style="left:766.99px;top:810px;font-size:14px;transform:scaleX(1.0133);">File folder</div>
<div class="t name" style="left:326.09px;top:847px;font-size:14px;transform:scaleX(0.9138);">chrome_BITS_13704_1704581395</div>
<div class="t gray" style="left:601.23px;top:847px;font-size:14px;transform:scaleX(0.9739);">12/9/2566 8:35</div>
<div class="t gray" style="left:766.99px;top:847px;font-size:14px;transform:scaleX(1.0133);">File folder</div>
<div class="t name" style="left:326.09px;top:885px;font-size:14px;transform:scaleX(0.9138);">chrome_BITS_13704_1908863378</div>
<div class="t gray" style="left:601.23px;top:885px;font-size:14px;transform:scaleX(0.9739);">12/9/2566 8:35</div>
<div class="t gray" style="left:766.99px;top:885px;font-size:14px;transform:scaleX(1.0133);">File folder</div>
<div class="t name" style="left:62.16px;top:170px;font-size:14px;transform:scaleX(1.0361);">Home</div>
<div class="t name" style="left:62.23px;top:207px;font-size:14px;transform:scaleX(0.9672);">OneDrive</div>
<div class="t name" style="left:62.21px;top:281px;font-size:14px;transform:scaleX(0.9900);">Desktop</div>
<div class="t name" style="left:62.19px;top:318px;font-size:14px;transform:scaleX(1.0088);">Downloads</div>
<div class="t name" style="left:62.21px;top:354px;font-size:14px;transform:scaleX(0.9942);">Documents</div>
<div class="t name" style="left:62.25px;top:391px;font-size:14px;transform:scaleX(0.9469);">Pictures</div>
<div class="t name" style="left:62.23px;top:428px;font-size:14px;transform:scaleX(0.9714);">Music</div>
<div class="t name" style="left:63.20px;top:465px;font-size:14px;transform:scaleX(0.9667);">Videos</div>
<div class="t name" style="left:63.20px;top:502px;font-size:14px;transform:scaleX(0.8694);">This PC</div>
<div class="t name" style="left:62.29px;top:539px;font-size:14px;transform:scaleX(0.9089);">อบรม201066</div>
<div class="t name" style="left:63.20px;top:575px;font-size:14px;">tmprun</div>
<div class="t name" style="left:63.20px;top:612px;font-size:14px;transform:scaleX(0.8736);">บันทึกข้อความ</div>
<div class="t name" style="left:63.20px;top:649px;font-size:14px;transform:scaleX(0.8533);">Ant_ฝ่ายวิเคราะห์</div>
<div class="t name" style="left:62.23px;top:723px;font-size:14px;transform:scaleX(0.9707);">OneDrive</div>
<div class="t name" style="left:63.20px;top:760px;font-size:14px;transform:scaleX(0.8653);">This PC</div>
<div class="t name" style="left:71.36px;top:797px;font-size:14px;transform:scaleX(0.9444);">Local Disk (C:)</div>
<div class="t name" style="left:71.31px;top:833px;font-size:14px;transform:scaleX(0.9873);">Data (D:)</div>
<div class="t name" style="left:62.17px;top:870px;font-size:14px;transform:scaleX(1.0260);">Network</div>
<div class="t" style="left:50.50px;top:12px;font-size:14.5px;transform:scaleX(1.0714);color:#1a1a1a;-webkit-text-stroke:0.25px #1a1a1a">Temp</div>
<div class="t tb" style="left:52.22px;top:62px;font-size:14px;transform:scaleX(1.0815);">New</div>
<div class="t tb" style="left:500.65px;top:62px;font-size:14px;transform:scaleX(1.0520);">Sort</div>
<div class="t tb" style="left:604.40px;top:62px;font-size:14px;transform:scaleX(1.0667);">View</div>
<div class="t addrt" style="left:210.80px;top:121px;font-size:14px;transform:scaleX(0.8633);">This PC</div>
<div class="t addrt" style="left:277.76px;top:121px;font-size:14px;transform:scaleX(0.9422);">Local Disk (C:)</div>
<div class="t addrt" style="left:387.89px;top:121px;font-size:14px;transform:scaleX(0.9086);">Users</div>
<div class="t addrt" style="left:444.86px;top:121px;font-size:14px;transform:scaleX(0.8429);">CCS</div>
<div class="t addrt" style="left:494.70px;top:121px;font-size:14px;transform:scaleX(0.9909);">AppData</div>
<div class="t addrt" style="left:574.36px;top:121px;font-size:14px;transform:scaleX(0.9438);">Local</div>
<div class="t addrt" style="left:631.90px;top:121px;font-size:14px;transform:scaleX(0.9794);">Temp</div>
<div class="t hdr" style="left:315.40px;top:167px;font-size:14px;">Name</div>
<div class="t hdr" style="left:600.96px;top:167px;font-size:14px;transform:scaleX(1.0365);">Date modified</div>
<div class="t hdr" style="left:767.00px;top:167px;font-size:14px;transform:scaleX(0.9333);">Type</div>
<div class="t hdr" style="left:904.06px;top:167px;font-size:14px;transform:scaleX(0.9385);">Size</div>
<div class="t status" style="left:14.71px;top:917px;font-size:14px;transform:scaleX(0.9898);">222 items</div>
<div class="t status" style="left:97.23px;top:917px;font-size:14px;transform:scaleX(0.9722);">222 items selected</div>
<div class="t search" style="left:108.03px;top:958px;font-size:17px;transform:scaleX(0.9712);">Search</div>
</body></html>
